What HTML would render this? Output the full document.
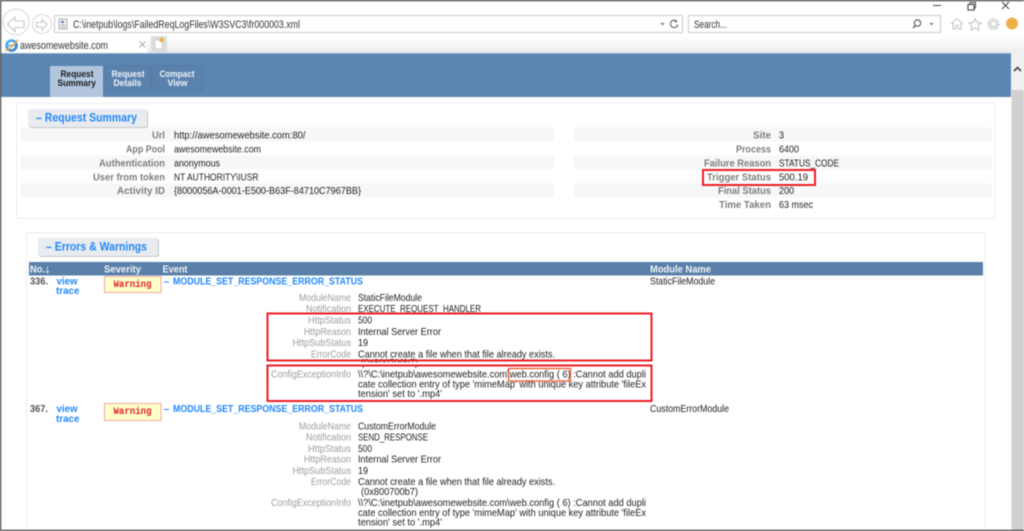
<!DOCTYPE html>
<html lang="en">
<head>
<meta charset="utf-8">
<title>awesomewebsite.com</title>
<style>
html,body{margin:0;padding:0;width:1024px;height:531px;overflow:hidden;background:#fff}
svg{display:block;filter:blur(.45px)}
text{font-family:"Liberation Sans",sans-serif;font-size:10.300px;fill:#1e1e1e}
.l{font-weight:bold;font-size:10.300px;fill:#7d7d7d}
.d{fill:#9c9c9c}
.w{font-weight:bold;fill:#f0f4f9}
.b{font-weight:bold;fill:#2288f8}
.h{font-weight:bold;font-size:11.500px;fill:#2288f8}
.wn{font-family:"Liberation Mono",monospace;font-weight:bold;font-size:10px;fill:#e02020}
.c{font-size:10.800px;fill:#333}
</style>
</head>
<body>
<svg xmlns="http://www.w3.org/2000/svg" width="1024" height="531" viewBox="0 0 1024 531">
<defs>
<linearGradient id="g" x1="0" y1="0" x2="0" y2="1"><stop offset="0" stop-color="#fff"/><stop offset="1" stop-color="#ececec"/></linearGradient>
<linearGradient id="ie" x1="0" y1="0" x2="1" y2="1"><stop offset="0" stop-color="#5db4f0"/><stop offset="1" stop-color="#2a78c8"/></linearGradient>
</defs>
<rect width="1024" height="531" fill="#fff"/>

<!-- browser chrome -->
<rect x="1" y="36" width="1023" height="17" fill="url(#g)"/>
<rect x="1" y="36" width="146" height="17" fill="#fff"/>

<circle cx="16" cy="22" r="13" fill="#fff" stroke="#d8d8d8" stroke-width="1"/>
<path d="M7.500 24 15 17v4h9v6.500h-9V32z" fill="#fff" stroke="#c8c8c8" stroke-width="1.100"/>
<circle cx="42" cy="24" r="9.500" fill="#fff" stroke="#d8d8d8"/>
<path d="M47 24.500 42 19.500v3H36.500V27H42v3z" fill="#fff" stroke="#c8c8c8" stroke-width="1.100"/>

<rect x="54.500" y="15.500" width="628" height="17" fill="#fff" stroke="#d4d4d4" stroke-width="1.300"/>
<rect x="59" y="19" width="8" height="10" fill="#f3f3f3" stroke="#9a9a9a" stroke-width=".8"/>
<rect x="61" y="21" width="3" height="2" fill="#4d7fb5"/>
<path d="M60.500 25H65.500M60.500 27H65.500" stroke="#999" stroke-width=".7"/>
<text class="c" x="73" y="28" textLength="227" lengthAdjust="spacingAndGlyphs">C:\inetpub\logs\FailedReqLogFiles\W3SVC3\fr000003.xml</text>
<path d="M660.500 23h4l-2 2.500z" fill="#777"/>
<path d="M677 21.500a3.700 3.700 0 1 0 .8 3" fill="none" stroke="#666" stroke-width="1.100"/>
<path d="M675 19.500l2.500 2.300-2.800 1" fill="#666"/>

<rect x="688.500" y="15.500" width="252" height="17" fill="#fff" stroke="#d4d4d4" stroke-width="1.300"/>
<text class="c" x="694" y="28" textLength="33" lengthAdjust="spacingAndGlyphs">Search...</text>
<circle cx="917.500" cy="23" r="3.200" fill="none" stroke="#555" stroke-width="1.100"/>
<path d="M915.500 25.500l-2.500 2.500" stroke="#555" stroke-width="1.300"/>
<path d="M929.500 23h4l-2 2.500z" fill="#777"/>

<path d="M951 24l6-5.500 6 5.500M953 23v6h2.700v-3.500h2.600V29H961v-6" fill="none" stroke="#c2c2c2" stroke-width="1"/>
<path d="M975 18.500l1.900 4 4.300.5-3.200 2.900.9 4.300-3.900-2.200-3.900 2.200.9-4.300-3.200-2.900 4.300-.5z" fill="none" stroke="#c2c2c2" stroke-width="1"/>
<circle cx="993.500" cy="24" r="3" fill="none" stroke="#c2c2c2"/>
<circle cx="993.500" cy="24" r="5" fill="none" stroke="#c2c2c2" stroke-width="1.800" stroke-dasharray="1.800 1.300"/>
<circle cx="1012" cy="23.500" r="6" fill="#eeb04a"/>
<path d="M1010 21.500v.8M1014 21.500v.8" stroke="#c98f30" stroke-width=".7"/>

<path d="M933 5.500H941" stroke="#444" stroke-width="1"/>
<rect x="968" y="4.500" width="6" height="5.500" fill="#fff" stroke="#444" stroke-width="1.100"/>
<path d="M970 4V2.500h5.500V8H974" fill="none" stroke="#444" stroke-width="1"/>
<path d="M1002 2l7 7M1009 2l-7 7" stroke="#444" stroke-width="1"/>

<!-- ie tab -->
<circle cx="11.500" cy="45.500" r="5" fill="none" stroke="url(#ie)" stroke-width="2.600"/>
<path d="M8 45.500h7" stroke="#3a88d0" stroke-width="1.200"/>
<path d="M5 50.500C8 51 15 44 18 39.500" fill="none" stroke="#eab040" stroke-width="1.400"/>
<text class="c" x="20" y="49" textLength="88" lengthAdjust="spacingAndGlyphs" style="fill:#333">awesomewebsite.com</text>
<path d="M139.500 41.500l6 6M145.500 41.500l-6 6" stroke="#b0b0b0" stroke-width="1.100"/>
<rect x="151" y="36" width="16" height="16.500" fill="#dcdcdc"/>
<path d="M155 40h7v9h-7z" fill="#fff" stroke="#c8c8c8" stroke-width=".7"/>
<circle cx="161.500" cy="40" r="2.400" fill="#f2b33d"/>

<!-- blue header -->
<rect x="1" y="53" width="1010" height="44" fill="#5b85b2"/>
<rect x="1" y="53" width="1010" height="1" fill="#8cabcb"/>
<rect x="103" y="66" width="48" height="24" fill="#5a82ad" stroke="#537aa4" stroke-width=".8"/>
<rect x="152" y="66" width="50" height="24" fill="#5a82ad" stroke="#537aa4" stroke-width=".8"/>
<rect x="50" y="66" width="53" height="31" fill="#b1c5dc"/>
<text x="60.500" y="77" class="l" style="fill:#1c1c1c;font-size:9.500px" textLength="33" lengthAdjust="spacingAndGlyphs">Request</text>
<text x="57.500" y="86" class="l" style="fill:#1c1c1c;font-size:9.500px" textLength="38.500" lengthAdjust="spacingAndGlyphs">Summary</text>
<text x="111.500" y="77" class="w" style="font-size:9.500px" textLength="33" lengthAdjust="spacingAndGlyphs">Request</text>
<text x="113.500" y="86" class="w" style="font-size:9.500px" textLength="28" lengthAdjust="spacingAndGlyphs">Details</text>
<text x="159.500" y="77" class="w" style="font-size:9.500px" textLength="35" lengthAdjust="spacingAndGlyphs">Compact</text>
<text x="167.500" y="86" class="w" style="font-size:9.500px" textLength="20" lengthAdjust="spacingAndGlyphs">View</text>

<!-- scrollbar -->
<rect x="1011.500" y="53" width="12.500" height="37" fill="#f0f0f0"/>
<rect x="1011.500" y="90" width="12.500" height="441" fill="#d0d0d0"/>
<path d="M1014 71l3.500-3.500 3.500 3.500" fill="none" stroke="#444" stroke-width="1.600"/>

<!-- panel 1 -->
<rect x="16.500" y="103.500" width="978" height="115" fill="#fff" stroke="#ececec"/>
<rect x="20" y="127.500" width="534" height="14" fill="#f6f7f7"/>
<rect x="20" y="155.500" width="534" height="14" fill="#f6f7f7"/>
<rect x="20" y="183.500" width="534" height="14" fill="#f6f7f7"/>
<rect x="574" y="127.500" width="418" height="14" fill="#f6f7f7"/>
<rect x="574" y="155.500" width="418" height="14" fill="#f6f7f7"/>
<rect x="574" y="183.500" width="418" height="14" fill="#f6f7f7"/>

<rect x="29" y="110" width="119" height="18" rx="2" fill="#c8c8c8"/>
<rect x="28" y="109" width="119" height="18" rx="2" fill="#e8ebef"/>
<text class="h" x="36" y="121.500" textLength="101" lengthAdjust="spacingAndGlyphs">– Request Summary</text>

<text class="l" x="152" y="138.500" textLength="13" lengthAdjust="spacingAndGlyphs">Url</text>
<text class="l" x="126" y="152.500" textLength="39" lengthAdjust="spacingAndGlyphs">App Pool</text>
<text class="l" x="99" y="166.500" textLength="66" lengthAdjust="spacingAndGlyphs">Authentication</text>
<text class="l" x="93" y="180.500" textLength="72" lengthAdjust="spacingAndGlyphs">User from token</text>
<text class="l" x="117" y="194" textLength="48" lengthAdjust="spacingAndGlyphs">Activity ID</text>
<text x="174" y="138.500" textLength="131.500" lengthAdjust="spacingAndGlyphs">http://awesomewebsite.com:80/</text>
<text x="174" y="152.500" textLength="87" lengthAdjust="spacingAndGlyphs">awesomewebsite.com</text>
<text x="174" y="166.500" textLength="46" lengthAdjust="spacingAndGlyphs">anonymous</text>
<text x="174" y="180.500" textLength="84.500" lengthAdjust="spacingAndGlyphs">NT AUTHORITY\IUSR</text>
<text x="174" y="194" textLength="187" lengthAdjust="spacingAndGlyphs">{8000056A-0001-E500-B63F-84710C7967BB}</text>

<text class="l" x="753" y="138.500" textLength="18" lengthAdjust="spacingAndGlyphs">Site</text>
<text class="l" x="736" y="152.500" textLength="35" lengthAdjust="spacingAndGlyphs">Process</text>
<text class="l" x="704" y="166.500" textLength="67" lengthAdjust="spacingAndGlyphs">Failure Reason</text>
<text class="l" x="707" y="180.500" textLength="64" lengthAdjust="spacingAndGlyphs">Trigger Status</text>
<text class="l" x="718" y="194" textLength="53" lengthAdjust="spacingAndGlyphs">Final Status</text>
<text class="l" x="719" y="208" textLength="52" lengthAdjust="spacingAndGlyphs">Time Taken</text>
<text x="779" y="138.500" textLength="5" lengthAdjust="spacingAndGlyphs">3</text>
<text x="779" y="152.500" textLength="20" lengthAdjust="spacingAndGlyphs">6400</text>
<text x="779" y="166.500" textLength="60" lengthAdjust="spacingAndGlyphs">STATUS_CODE</text>
<text x="779" y="180.500" textLength="29" lengthAdjust="spacingAndGlyphs">500.19</text>
<text x="779" y="194" textLength="15" lengthAdjust="spacingAndGlyphs">200</text>
<text x="779" y="208" textLength="34" lengthAdjust="spacingAndGlyphs">63 msec</text>

<!-- panel 2 -->
<path d="M26.500 531V232.500H985.500V531" fill="#fff" stroke="#ececec"/>
<rect x="39" y="239" width="120" height="18" rx="2" fill="#c8c8c8"/>
<rect x="38" y="238" width="120" height="18" rx="2" fill="#e8ebef"/>
<text class="h" x="46" y="250.500" textLength="101" lengthAdjust="spacingAndGlyphs">– Errors &amp; Warnings</text>

<rect x="29" y="262" width="954" height="13.500" fill="#5a80a9"/>
<text class="w" x="30" y="272.500" textLength="15" lengthAdjust="spacingAndGlyphs">No.</text>
<path d="M47.500 266.500v6M46 271l1.500 2 1.500-2" fill="none" stroke="#dfe8f2" stroke-width=".7"/>
<text class="w" x="104" y="272.500" textLength="37" lengthAdjust="spacingAndGlyphs">Severity</text>
<text class="w" x="162.500" y="272.500" textLength="25" lengthAdjust="spacingAndGlyphs">Event</text>
<text class="w" x="650" y="272.500" textLength="61" lengthAdjust="spacingAndGlyphs">Module Name</text>

<!-- row 336 -->
<text x="30" y="284.500" style="font-weight:bold;fill:#555" textLength="18" lengthAdjust="spacingAndGlyphs">336.</text>
<text class="b" x="56.500" y="284.500" textLength="21" lengthAdjust="spacingAndGlyphs">view</text>
<text class="b" x="56" y="294" textLength="23.500" lengthAdjust="spacingAndGlyphs">trace</text>
<rect x="104.500" y="276.500" width="56.500" height="16" fill="#ffffcc" stroke="#f2a8a0"/>
<text class="wn" x="113.500" y="287" textLength="38" lengthAdjust="spacingAndGlyphs">Warning</text>
<text class="b" x="163.500" y="284.500">–</text>
<text class="b" x="173" y="284.500" textLength="190" lengthAdjust="spacingAndGlyphs">MODULE_SET_RESPONSE_ERROR_STATUS</text>
<text x="650" y="284.500" textLength="65" lengthAdjust="spacingAndGlyphs">StaticFileModule</text>

<text class="d" x="299" y="301" textLength="52" lengthAdjust="spacingAndGlyphs">ModuleName</text>
<text x="358" y="301" textLength="64" lengthAdjust="spacingAndGlyphs">StaticFileModule</text>
<text class="d" x="306" y="312" textLength="45" lengthAdjust="spacingAndGlyphs">Notification</text>
<text x="358" y="312" textLength="123" lengthAdjust="spacingAndGlyphs">EXECUTE_REQUEST_HANDLER</text>
<text class="d" x="308" y="323.500" textLength="43" lengthAdjust="spacingAndGlyphs">HttpStatus</text>
<text x="358" y="323.500" textLength="14" lengthAdjust="spacingAndGlyphs">500</text>
<text class="d" x="304" y="335" textLength="47" lengthAdjust="spacingAndGlyphs">HttpReason</text>
<text x="358" y="335" textLength="83" lengthAdjust="spacingAndGlyphs">Internal Server Error</text>
<text class="d" x="292.500" y="346" textLength="58.500" lengthAdjust="spacingAndGlyphs">HttpSubStatus</text>
<text x="358" y="346" textLength="10" lengthAdjust="spacingAndGlyphs">19</text>
<text class="d" x="311" y="357.500" textLength="40" lengthAdjust="spacingAndGlyphs">ErrorCode</text>
<text x="358" y="357.500" textLength="197" lengthAdjust="spacingAndGlyphs">Cannot create a file when that file already exists.</text>
<text x="361" y="366" textLength="57" lengthAdjust="spacingAndGlyphs">(0x800700b7)</text>
<rect x="268" y="362.500" width="384" height="3" fill="#fff"/>
<text class="d" x="271" y="377.500" textLength="80" lengthAdjust="spacingAndGlyphs">ConfigExceptionInfo</text>
<text x="358" y="377.500" textLength="288" lengthAdjust="spacingAndGlyphs">\\?\C:\inetpub\awesomewebsite.com\web.config ( 6) :Cannot add dupli</text>
<text x="358" y="387.500" textLength="288" lengthAdjust="spacingAndGlyphs">cate collection entry of type 'mimeMap' with unique key attribute 'fileEx</text>
<text x="358" y="397" textLength="84" lengthAdjust="spacingAndGlyphs">tension' set to '.mp4'</text>

<!-- row 367 -->
<text x="30" y="412" style="font-weight:bold;fill:#555" textLength="18" lengthAdjust="spacingAndGlyphs">367.</text>
<text class="b" x="56.500" y="412" textLength="21" lengthAdjust="spacingAndGlyphs">view</text>
<text class="b" x="56" y="422" textLength="23.500" lengthAdjust="spacingAndGlyphs">trace</text>
<rect x="104.500" y="403.500" width="56.500" height="17" fill="#ffffcc" stroke="#f2a8a0"/>
<text class="wn" x="113.500" y="414" textLength="38" lengthAdjust="spacingAndGlyphs">Warning</text>
<text class="b" x="163.500" y="412">–</text>
<text class="b" x="173" y="412" textLength="190" lengthAdjust="spacingAndGlyphs">MODULE_SET_RESPONSE_ERROR_STATUS</text>
<text x="650" y="412" textLength="79" lengthAdjust="spacingAndGlyphs">CustomErrorModule</text>

<text class="d" x="299" y="429.500" textLength="52" lengthAdjust="spacingAndGlyphs">ModuleName</text>
<text x="358" y="429.500" textLength="78" lengthAdjust="spacingAndGlyphs">CustomErrorModule</text>
<text class="d" x="306" y="440.500" textLength="45" lengthAdjust="spacingAndGlyphs">Notification</text>
<text x="358" y="440.500" textLength="70" lengthAdjust="spacingAndGlyphs">SEND_RESPONSE</text>
<text class="d" x="308" y="452" textLength="43" lengthAdjust="spacingAndGlyphs">HttpStatus</text>
<text x="358" y="452" textLength="14" lengthAdjust="spacingAndGlyphs">500</text>
<text class="d" x="304" y="462.500" textLength="47" lengthAdjust="spacingAndGlyphs">HttpReason</text>
<text x="358" y="462.500" textLength="83" lengthAdjust="spacingAndGlyphs">Internal Server Error</text>
<text class="d" x="292.500" y="474" textLength="58.500" lengthAdjust="spacingAndGlyphs">HttpSubStatus</text>
<text x="358" y="474" textLength="10" lengthAdjust="spacingAndGlyphs">19</text>
<text class="d" x="311" y="485" textLength="40" lengthAdjust="spacingAndGlyphs">ErrorCode</text>
<text x="358" y="485" textLength="197" lengthAdjust="spacingAndGlyphs">Cannot create a file when that file already exists.</text>
<text x="361" y="495" textLength="57" lengthAdjust="spacingAndGlyphs">(0x800700b7)</text>
<text class="d" x="271" y="506" textLength="80" lengthAdjust="spacingAndGlyphs">ConfigExceptionInfo</text>
<text x="358" y="506" textLength="288" lengthAdjust="spacingAndGlyphs">\\?\C:\inetpub\awesomewebsite.com\web.config ( 6) :Cannot add dupli</text>
<text x="358" y="516" textLength="288" lengthAdjust="spacingAndGlyphs">cate collection entry of type 'mimeMap' with unique key attribute 'fileEx</text>
<text x="358" y="525.500" textLength="84" lengthAdjust="spacingAndGlyphs">tension' set to '.mp4'</text>

<!-- annotation boxes -->
<g fill="none" stroke="#ee1c25">
<rect x="703" y="170" width="112" height="15" stroke-width="2"/>
<rect x="267.500" y="313.500" width="384" height="47" stroke-width="2"/>
<rect x="267.500" y="365.500" width="384" height="35.500" stroke-width="2"/>
<rect x="508.500" y="368.500" width="62" height="12.500" stroke="#ee5a30" stroke-width="1.300"/>
</g>

<!-- screenshot border -->
<rect x="0" y="0" width="1024" height="1.200" fill="#3a3a3a"/>
<rect x="0" y="0" width="1.200" height="531" fill="#3a3a3a"/>
<rect x="0" y="529.800" width="1024" height="1.200" fill="#3a3a3a"/>
</svg>
</body>
</html>
